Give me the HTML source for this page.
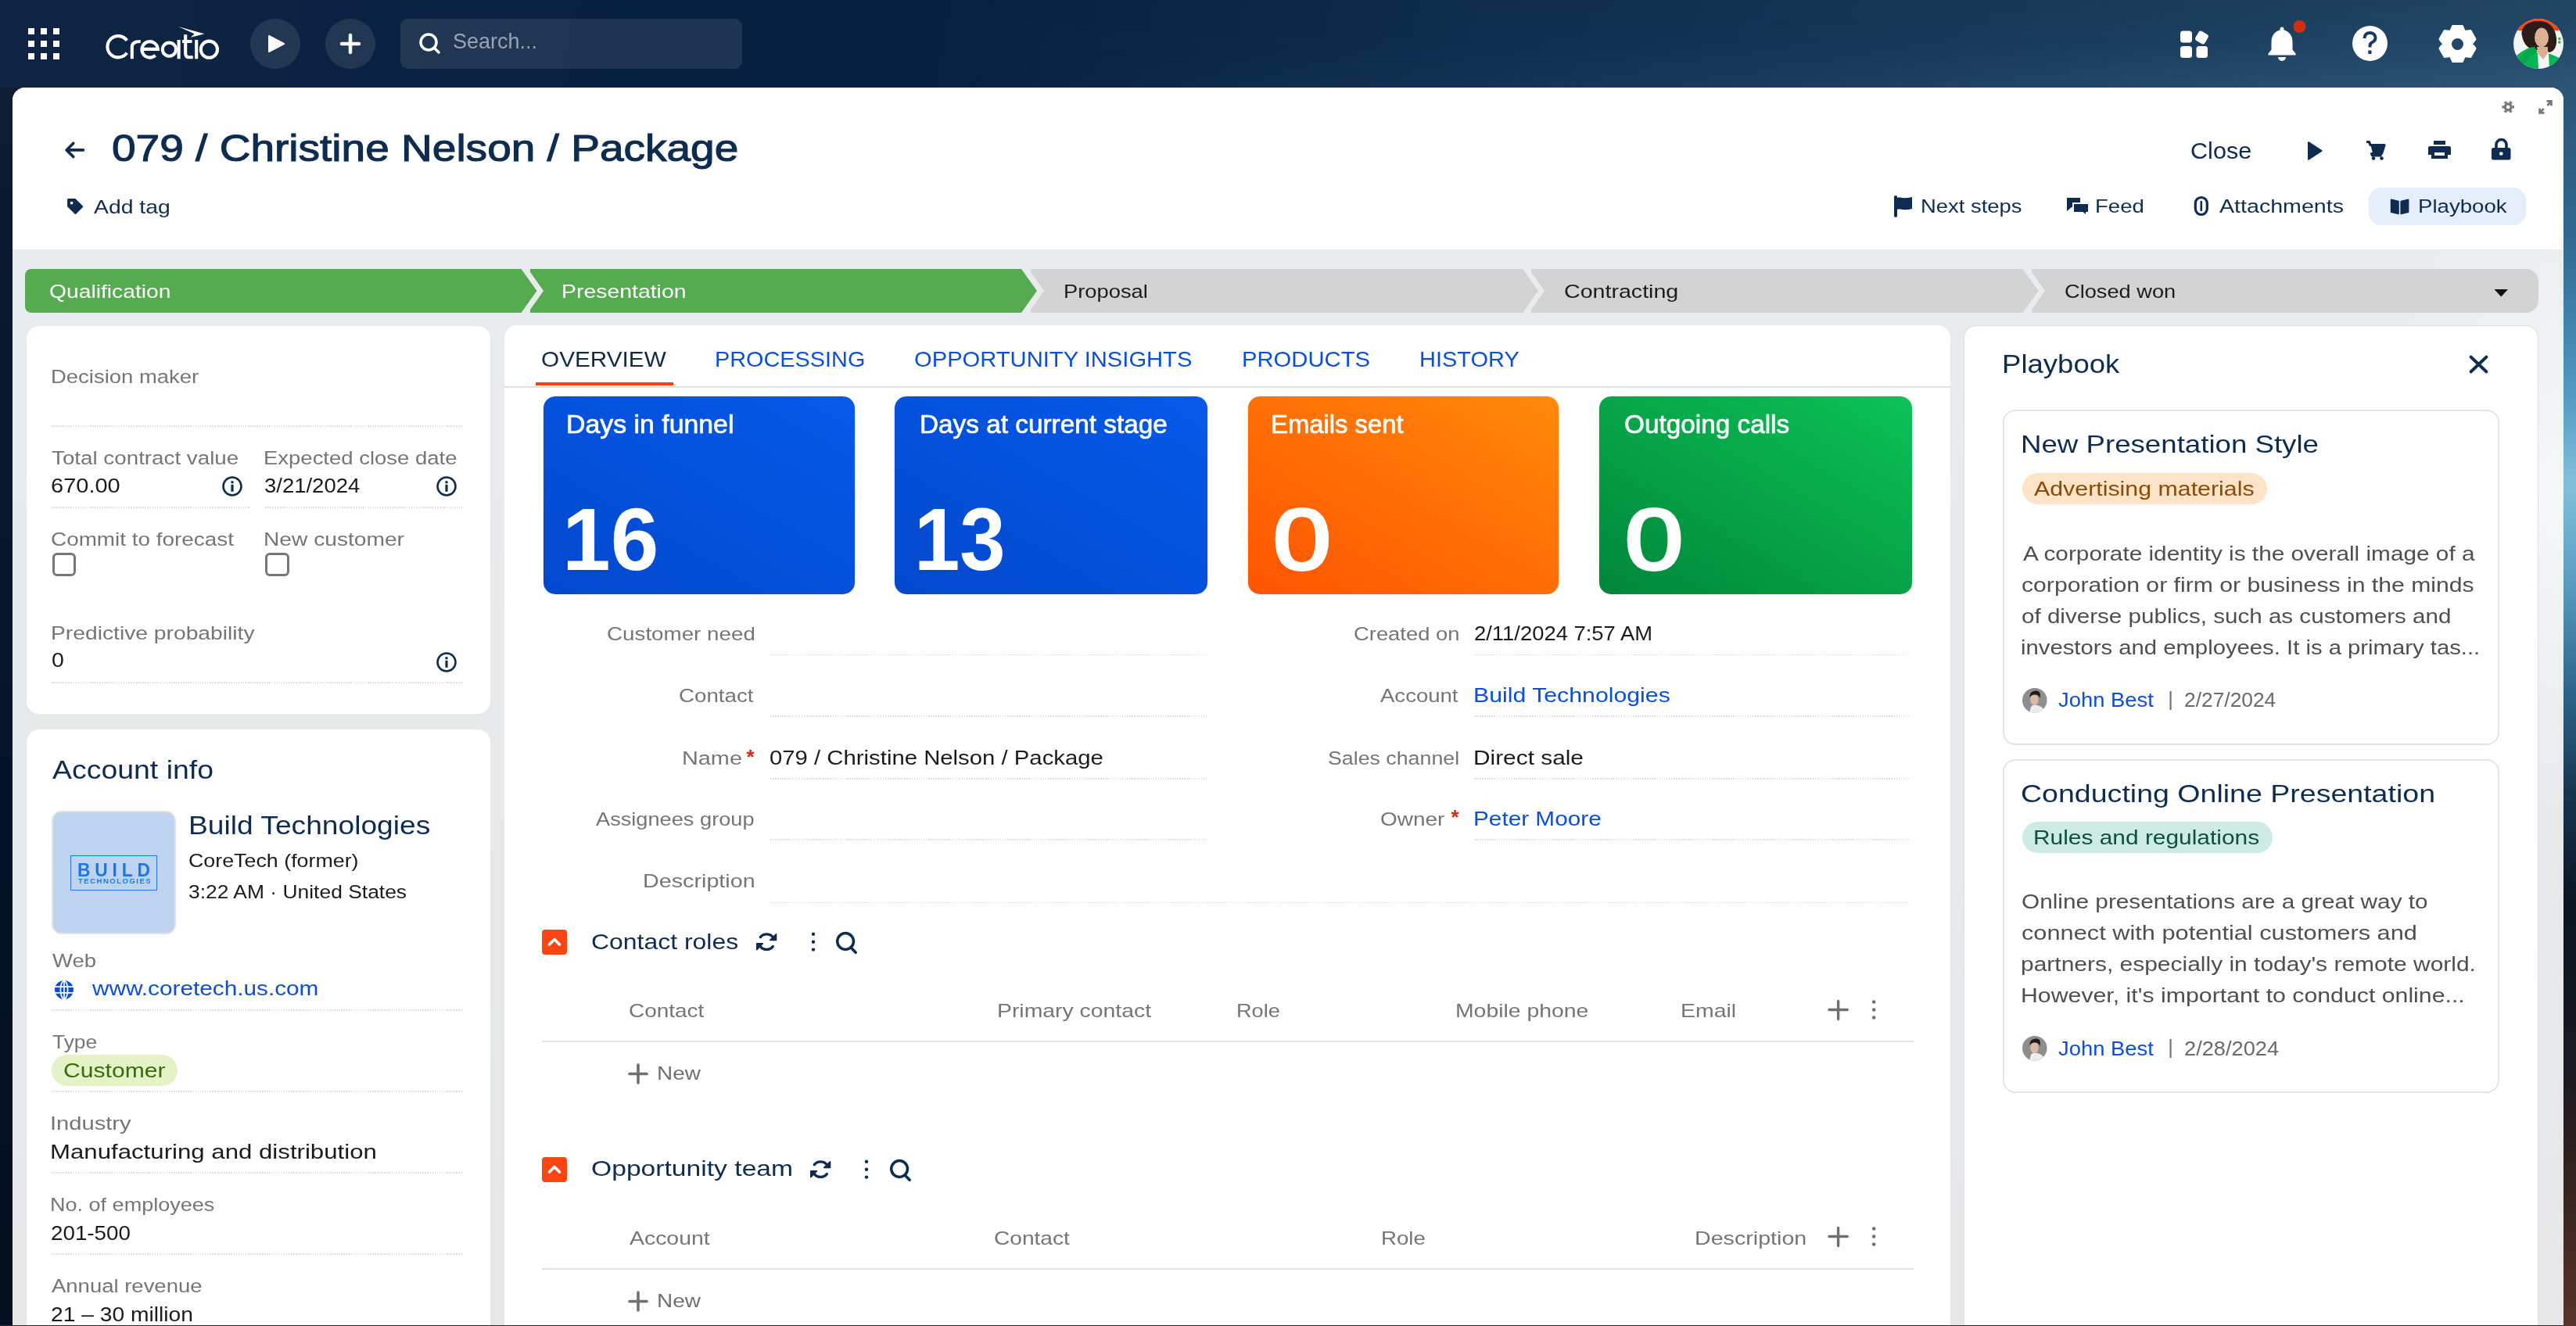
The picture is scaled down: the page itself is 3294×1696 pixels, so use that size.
<!DOCTYPE html><html><head><meta charset="utf-8"><style>
html,body{margin:0;padding:0;width:3294px;height:1696px;overflow:hidden;background:#0a1e38}
body{position:relative;font-family:"Liberation Sans",sans-serif}
.t{position:absolute;white-space:pre;transform-origin:0 0}
svg{overflow:visible}
</style></head><body>
<div style="position:absolute;left:0;top:0;width:3294px;height:1696px;background:linear-gradient(100deg,#0f2543 0%,#05203f 30%,#133253 60%,#28506f 100%)"></div><div style="position:absolute;left:1200px;top:0;width:2094px;height:112px;background:linear-gradient(180deg,rgba(0,0,0,0.07) 0%,rgba(255,255,255,0) 50%,rgba(120,170,210,0.12) 100%);-webkit-mask-image:linear-gradient(90deg,transparent 0%,#000 100%)"></div><div style="position:absolute;left:3270px;top:112px;width:24px;height:1584px;background:linear-gradient(180deg,#2a5577 0%,#2f6890 12%,#4f97c0 24%,#80c0dc 32%,#5a9cc0 40%,#2f6a90 48%,#163650 57%,#0a1522 66%,#1c1a20 80%,#3a2520 90%,#5a3428 100%)"></div><div style="position:absolute;left:0;top:112px;width:24px;height:1584px;background:linear-gradient(180deg,#0b1c33 0%,#05142a 50%,#03101f 100%)"></div><div style="position:absolute;left:36px;top:36px;width:8px;height:8px;background:#fff"></div><div style="position:absolute;left:36px;top:52px;width:8px;height:8px;background:#fff"></div><div style="position:absolute;left:36px;top:68px;width:8px;height:8px;background:#fff"></div><div style="position:absolute;left:52px;top:36px;width:8px;height:8px;background:#fff"></div><div style="position:absolute;left:52px;top:52px;width:8px;height:8px;background:#fff"></div><div style="position:absolute;left:52px;top:68px;width:8px;height:8px;background:#fff"></div><div style="position:absolute;left:68px;top:36px;width:8px;height:8px;background:#fff"></div><div style="position:absolute;left:68px;top:52px;width:8px;height:8px;background:#fff"></div><div style="position:absolute;left:68px;top:68px;width:8px;height:8px;background:#fff"></div><svg style="position:absolute;left:0;top:0" width="400" height="112"><g fill="none" stroke="#fff" stroke-width="4.1">
<path d="M162.3 51.8 A13.7 13.7 0 1 0 162.3 67.6"/>
<path d="M168.8 75.3 V60 Q168.8 53 179.7 53"/>
<path d="M181.4 62.9 H201.8 A10.2 10.2 0 1 0 198.6 70.8"/>
<circle cx="216.4" cy="63.2" r="8.6"/>
<path d="M228.6 51 V75.3"/>
<path d="M237.2 44.3 V68.5 Q237.2 73.3 242 73.3 H246.8 M233 53 H245.5"/>
<path d="M251.2 51 V75.3"/>
<circle cx="267.4" cy="63.2" r="10.6"/></g>
<polygon points="228,34 261.4,43.3 244,47.7 248.5,43.2" fill="#fff"/></svg><div style="position:absolute;left:320px;top:24px;width:64px;height:64px;border-radius:50%;background:rgba(255,255,255,0.095)"></div><svg style="position:absolute;left:0;top:0" width="500" height="112"><polygon points="344,46 363,56 344,66" fill="#fff" stroke="#fff" stroke-width="2" stroke-linejoin="round"/></svg><div style="position:absolute;left:416px;top:24px;width:64px;height:64px;border-radius:50%;background:rgba(255,255,255,0.095)"></div><svg style="position:absolute;left:0;top:0" width="500" height="112"><path d="M448 45 V67 M437 56 H459" stroke="#fff" stroke-width="4.5" stroke-linecap="round"/></svg><div style="position:absolute;left:512px;top:24px;width:437px;height:64px;border-radius:9px;background:rgba(255,255,255,0.095)"></div><svg style="position:absolute;left:0;top:0" width="1000" height="112"><circle cx="548" cy="54" r="10" fill="none" stroke="#fff" stroke-width="3.5"/><path d="M555.5 61.5 L561 67" stroke="#fff" stroke-width="3.5" stroke-linecap="round"/></svg><svg style="position:absolute;left:2700px;top:0" width="594" height="112">
<rect x="88" y="39.5" width="15" height="15" rx="3.5" fill="#fff"/>
<rect x="88" y="59" width="15" height="15" rx="3.5" fill="#fff"/>
<rect x="108.5" y="59" width="14.5" height="15" rx="3.5" fill="#fff"/>
<rect x="108.5" y="41" width="14" height="14" rx="3.5" fill="#fff" transform="rotate(30 115.5 48)"/>
<path d="M218 34.5 c-1.5 0 -2.5 1 -2.5 2.5 v1.5 c-7 1.7 -11 7.5 -11 15 v10 l-4 5 v2 h35 v-2 l-4 -5 v-10 c0 -7.5 -4 -13.3 -11 -15 v-1.5 c0 -1.5 -1 -2.5 -2.5 -2.5z M213 73 a5 5 0 0 0 10 0z" fill="#fff"/>
<circle cx="240.5" cy="34" r="8" fill="#d22f12"/>
<circle cx="330.5" cy="55.5" r="22.5" fill="#fff"/>
<path d="M323.5 49 c0 -4.5 3 -7 7 -7 s7 2.5 7 6.5 c0 3 -2 4.5 -4 5.5 c-2 1 -3 2 -3 4.5 v2" fill="none" stroke="#1a3a5a" stroke-width="4"/>
<rect x="328.3" y="64.5" width="4.2" height="4.5" fill="#1a3a5a"/>
<g transform="translate(442.5 56.5)"><path d="M-6 -23 h12 l3 7 l7.5 -1 l6 10.5 l-4.5 6 l4.5 6 l-6 10.5 l-7.5 -1 l-3 7 h-12 l-3 -7 l-7.5 1 l-6 -10.5 l4.5 -6 l-4.5 -6 l6 -10.5 l7.5 1z" fill="#fff" stroke="#fff" stroke-width="3" stroke-linejoin="round"/><circle r="7.5" fill="#234766"/></g>
</svg><svg style="position:absolute;left:3214.4px;top:23.8px" width="64" height="64"><defs><clipPath id="av"><circle cx="32" cy="32" r="32"/></clipPath></defs>
<g clip-path="url(#av)"><rect width="64" height="64" fill="#f3f3f3"/><rect width="64" height="15" fill="#ff4510"/>
<path d="M11 22 C8 10 20 2 33 3 C46 3 54 12 55 25 C56 35 52 42 46 43 L40 40 L27 40 C18 38 13 32 11 22z" fill="#2b1b19"/>
<ellipse cx="36" cy="24" rx="9" ry="12.5" fill="#dcae94"/>
<path d="M27 12 C22 18 24 30 27 38 L22 38 C18 28 20 16 27 12z" fill="#2b1b19"/>
<path d="M0 64 L0 52 C4 46 10 42 18 38 C22 36 26 36 28 38 L30 44 L44 44 C50 46 58 50 64 52 V64z" fill="#06b555"/>
<path d="M6 52 C12 44 19 38 27 36 L31 42 C24 46 18 52 12 60z" fill="#00a84c"/>
<path d="M31 44 L45 44 L46 64 L32 64z" fill="#f6f6f6"/><path d="M30 36 L44 36 L44 44 L38 52 L31 44z" fill="#dcae94"/>
<circle cx="58.8" cy="25.5" r="1.8" fill="#3cb043"/><circle cx="58.8" cy="30" r="1.8" fill="#3cb043"/></g></svg><div style="position:absolute;left:16px;top:112px;width:3262px;height:1583px;border-radius:16px 16px 0 0;background:radial-gradient(ellipse 260px 420px at 100% 33%,rgba(244,249,252,0.95),rgba(244,249,252,0) 100%),linear-gradient(180deg,#e9edf0 0%,#e7e9eb 40%,#e7e7e8 100%);overflow:hidden"><div style="position:absolute;left:0;top:0;width:3262px;height:207px;background:#fff"></div></div><svg style="position:absolute;left:0;top:100px" width="300" height="200"><path d="M106.5 91.9 H85.6 M93.8 83.2 L85.1 91.9 L93.8 100.6" fill="none" stroke="#0d2c4f" stroke-width="3.6" stroke-linecap="round" stroke-linejoin="round"/><path d="M87.2 155 h8.6 l9.3 9.3 l-8.6 8.6 l-9.3 -9.3z" fill="#0d2c4f" stroke="#0d2c4f" stroke-width="2.2" stroke-linejoin="round"/><rect x="90" y="158" width="3.2" height="3.2" fill="#fff"/></svg><svg style="position:absolute;left:3190px;top:120px" width="90" height="40">
<g transform="translate(17.2 16.9)"><circle r="6.6" fill="none" stroke="#777" stroke-width="2.6" stroke-dasharray="3.3 3.6" transform="rotate(-15)"/><circle r="5.6" fill="#777"/><circle r="2.4" fill="#fff"/></g>
<path d="M67.3 15 L71.5 10.5 M63 144 M57.6 24.4 L62.8 19" stroke="#777" stroke-width="2.6"/><path d="M66.5 9.3 H72.4 V15.2 M57.6 18.8 V24.4 H63.4" fill="none" stroke="#777" stroke-width="2.8"/>
</svg><svg style="position:absolute;left:2900px;top:160px" width="340" height="60">
<path d="M52 22 L68.5 32.8 L52 43.7z" fill="#0d2c4f" stroke="#0d2c4f" stroke-width="2" stroke-linejoin="round"/>
<path d="M126 21.5 h3.5 l1.5 4 h18 l-3.5 11 h-13 l1 2.5 h12" fill="none" stroke="#0d2c4f" stroke-width="3.2" stroke-linejoin="round"/><path d="M131.5 26 h17 l-3 10 h-11.5z" fill="#0d2c4f"/><circle cx="135" cy="42.5" r="2.3" fill="#0d2c4f"/><circle cx="145.5" cy="42.5" r="2.3" fill="#0d2c4f"/>
<path d="M212 20 h15 v5 h-15z M207 27 h25 a2 2 0 0 1 2 2 v9 h-4 v5 h-21 v-5 h-4 v-9 a2 2 0 0 1 2 -2z" fill="#0d2c4f"/><rect x="213" y="35" width="13" height="4" fill="#fff"/>
<path d="M292 30 v-5 a6.5 6.5 0 0 1 13 0 v5" fill="none" stroke="#0d2c4f" stroke-width="3.6"/><rect x="286" y="29" width="24.5" height="15.5" rx="2.5" fill="#0d2c4f"/><circle cx="298.3" cy="36.5" r="2.3" fill="#fff"/>
</svg><div style="position:absolute;left:3029px;top:240px;width:201px;height:48px;border-radius:16px;background:#e5ecfa"></div><svg style="position:absolute;left:2400px;top:240px" width="700" height="50">
<path d="M24 12 v24" stroke="#0d2c4f" stroke-width="4" stroke-linecap="round"/><path d="M24 13 c6 -2 10 2 21 -1 v15 c-10 3 -15 -1 -21 1z" fill="#0d2c4f"/>
<path d="M243 13 h17 v12 h-11 l-6 5z" fill="#0d2c4f"/><path d="M251 20 h20 v12 h-3 v4 l-5 -4 h-12z" fill="#0d2c4f" stroke="#fff" stroke-width="2"/>
<rect x="407.3" y="12.5" width="15" height="22" rx="7.5" fill="none" stroke="#0d2c4f" stroke-width="3.2"/><path d="M414.8 18 V29" stroke="#0d2c4f" stroke-width="2.6" stroke-linecap="round"/>
<path d="M657.8 15.5 L666.8 17.8 V33.3 L657.8 31z M679.4 15.5 L670.4 17.8 V33.3 L679.4 31z" fill="#0d2c4f" stroke="#0d2c4f" stroke-width="2" stroke-linejoin="round"/>
</svg><svg style="position:absolute;left:0;top:0" width="3294" height="420"><path d="M40 344 H666.5 L686.5 372 L666.5 400 H40 a8 8 0 0 1 -8 -8 V352 a8 8 0 0 1 8 -8z" fill="#56ab50"/><path d="M678 344 H1306 L1326 372 L1306 400 H678 V396 L695 372 L678 348z" fill="#56ab50"/><path d="M1318 344 H1947 L1967 372 L1947 400 H1318 V396 L1335 372 L1318 348z" fill="#d3d3d3"/><path d="M1958 344 H2586.5 L2606.5 372 L2586.5 400 H1958 V396 L1975 372 L1958 348z" fill="#d3d3d3"/><path d="M2598 344 H3230 a16 16 0 0 1 16 16 V384 a16 16 0 0 1 -16 16 H2598 V396 L2615 372 L2598 348z" fill="#d3d3d3"/><path d="M3189.5 370 h17.5 l-8.75 9.5z" fill="#111"/></svg><div style="position:absolute;left:34px;top:417px;width:593px;height:496px;border-radius:16px;background:#fff"></div><div style="position:absolute;left:66px;top:544.25px;width:525px;height:1.6px;background:repeating-linear-gradient(90deg,#e0e0e0 0 1.6px,transparent 1.6px 3.06px)"></div><div style="position:absolute;left:66px;top:648.25px;width:253px;height:1.6px;background:repeating-linear-gradient(90deg,#e0e0e0 0 1.6px,transparent 1.6px 3.06px)"></div><div style="position:absolute;left:339px;top:648.25px;width:252px;height:1.6px;background:repeating-linear-gradient(90deg,#e0e0e0 0 1.6px,transparent 1.6px 3.06px)"></div><svg style="position:absolute;left:283px;top:608.3px" width="28" height="28"><circle cx="14" cy="14" r="11.5" fill="none" stroke="#0d2c4f" stroke-width="2.6"/><circle cx="14" cy="8.8" r="1.8" fill="#0d2c4f"/><rect x="12.4" y="11.8" width="3.2" height="9" fill="#0d2c4f"/></svg><svg style="position:absolute;left:556.5px;top:608.3px" width="28" height="28"><circle cx="14" cy="14" r="11.5" fill="none" stroke="#0d2c4f" stroke-width="2.6"/><circle cx="14" cy="8.8" r="1.8" fill="#0d2c4f"/><rect x="12.4" y="11.8" width="3.2" height="9" fill="#0d2c4f"/></svg><div style="position:absolute;left:66.5px;top:707px;width:30.5px;height:30px;box-sizing:border-box;border:3px solid #777;border-radius:6px"></div><div style="position:absolute;left:339px;top:707px;width:30.5px;height:30px;box-sizing:border-box;border:3px solid #777;border-radius:6px"></div><svg style="position:absolute;left:556.5px;top:832.5px" width="28" height="28"><circle cx="14" cy="14" r="11.5" fill="none" stroke="#0d2c4f" stroke-width="2.6"/><circle cx="14" cy="8.8" r="1.8" fill="#0d2c4f"/><rect x="12.4" y="11.8" width="3.2" height="9" fill="#0d2c4f"/></svg><div style="position:absolute;left:66px;top:872.25px;width:525px;height:1.6px;background:repeating-linear-gradient(90deg,#e0e0e0 0 1.6px,transparent 1.6px 3.06px)"></div><div style="position:absolute;left:34px;top:933px;width:593px;height:800px;border-radius:16px;background:#fff"></div><div style="position:absolute;left:66px;top:1037px;width:159px;height:158px;box-sizing:border-box;border-radius:13px;background:#bdd3f0;border:2px solid #dfe2e6"></div><div style="position:absolute;left:90px;top:1094px;width:111px;height:45px;box-sizing:border-box;border:1.6px solid #1f78e4"></div><svg style="position:absolute;left:69.8px;top:1253.5px" width="24" height="24"><circle cx="12" cy="12" r="12" fill="#0b4fd6"/><path d="M0 8.2 H24 M0 15.8 H24 M12 0 V24" stroke="#fff" stroke-width="1.7"/><ellipse cx="12" cy="12" rx="4.6" ry="11.5" fill="none" stroke="#fff" stroke-width="1.7"/></svg><div style="position:absolute;left:66px;top:1291.25px;width:525px;height:1.6px;background:repeating-linear-gradient(90deg,#e0e0e0 0 1.6px,transparent 1.6px 3.06px)"></div><div style="position:absolute;left:66px;top:1349px;width:161px;height:39.5px;border-radius:20px;background:#e4f2c8"></div><div style="position:absolute;left:66px;top:1395.25px;width:525px;height:1.6px;background:repeating-linear-gradient(90deg,#e0e0e0 0 1.6px,transparent 1.6px 3.06px)"></div><div style="position:absolute;left:66px;top:1499.25px;width:525px;height:1.6px;background:repeating-linear-gradient(90deg,#e0e0e0 0 1.6px,transparent 1.6px 3.06px)"></div><div style="position:absolute;left:66px;top:1603.25px;width:525px;height:1.6px;background:repeating-linear-gradient(90deg,#e0e0e0 0 1.6px,transparent 1.6px 3.06px)"></div><div style="position:absolute;left:645px;top:416px;width:1849px;height:1400px;border-radius:16px;background:#fff"></div><div style="position:absolute;left:645px;top:494.2px;width:1849px;height:1.7px;background:#e0e0e0"></div><div style="position:absolute;left:685px;top:489.2px;width:175.5px;height:3.4px;background:#fc3f10"></div><div style="position:absolute;left:694.7px;top:507px;width:397.89999999999986px;height:252.5px;border-radius:15px;box-shadow:0 0 0 1px rgba(0,0,0,0.07);background:linear-gradient(30deg,#0249cc 0%,#0659ea 100%)"></div><div style="position:absolute;left:1144px;top:507px;width:399.70000000000005px;height:252.5px;border-radius:15px;box-shadow:0 0 0 1px rgba(0,0,0,0.07);background:linear-gradient(30deg,#0249cc 0%,#0659ea 100%)"></div><div style="position:absolute;left:1595.5px;top:507px;width:397.5px;height:252.5px;border-radius:15px;box-shadow:0 0 0 1px rgba(0,0,0,0.07);background:linear-gradient(30deg,#ff5400 0%,#ff890b 100%)"></div><div style="position:absolute;left:2045px;top:507px;width:399.5px;height:252.5px;border-radius:15px;box-shadow:0 0 0 1px rgba(0,0,0,0.07);background:linear-gradient(30deg,#008639 0%,#0cc257 100%)"></div><div style="position:absolute;left:985px;top:836.65px;width:558px;height:1.6px;background:repeating-linear-gradient(90deg,#e0e0e0 0 1.6px,transparent 1.6px 3.06px)"></div><div style="position:absolute;left:1886.4px;top:836.65px;width:556.5999999999999px;height:1.6px;background:repeating-linear-gradient(90deg,#e0e0e0 0 1.6px,transparent 1.6px 3.06px)"></div><div style="position:absolute;left:985px;top:914.95px;width:558px;height:1.6px;background:repeating-linear-gradient(90deg,#e0e0e0 0 1.6px,transparent 1.6px 3.06px)"></div><div style="position:absolute;left:1886.4px;top:914.95px;width:556.5999999999999px;height:1.6px;background:repeating-linear-gradient(90deg,#e0e0e0 0 1.6px,transparent 1.6px 3.06px)"></div><div style="position:absolute;left:985px;top:995.25px;width:558px;height:1.6px;background:repeating-linear-gradient(90deg,#e0e0e0 0 1.6px,transparent 1.6px 3.06px)"></div><div style="position:absolute;left:1886.4px;top:995.25px;width:556.5999999999999px;height:1.6px;background:repeating-linear-gradient(90deg,#e0e0e0 0 1.6px,transparent 1.6px 3.06px)"></div><div style="position:absolute;left:985px;top:1073.25px;width:558px;height:1.6px;background:repeating-linear-gradient(90deg,#e0e0e0 0 1.6px,transparent 1.6px 3.06px)"></div><div style="position:absolute;left:1886.4px;top:1073.25px;width:556.5999999999999px;height:1.6px;background:repeating-linear-gradient(90deg,#e0e0e0 0 1.6px,transparent 1.6px 3.06px)"></div><div style="position:absolute;left:985px;top:1153.55px;width:1458px;height:1.6px;background:repeating-linear-gradient(90deg,#e0e0e0 0 1.6px,transparent 1.6px 3.06px)"></div><div style="position:absolute;left:693px;top:1189px;width:32px;height:31.5px;border-radius:4px;background:#fb4614"></div><svg style="position:absolute;left:693px;top:1189px" width="32" height="32"><path d="M9.5 19 L16 12.5 L22.5 19" fill="none" stroke="#fff" stroke-width="3.6" stroke-linecap="round" stroke-linejoin="round"/></svg><svg style="position:absolute;left:959.3px;top:1185px" width="40" height="40"><path d="M13.3 13.6 A10.3 10.3 0 0 1 29.3 13.6 M29.3 25.6 A10.3 10.3 0 0 1 13.3 25.6" fill="none" stroke="#0d2c4f" stroke-width="3.3" stroke-linecap="round"/><path d="M33.5 9.8 V17.4 H25.8z M8.8 21.7 V29.6 L16.4 21.7z" fill="#0d2c4f" stroke="#0d2c4f" stroke-width="1.6" stroke-linejoin="round"/></svg><svg style="position:absolute;left:1035.6px;top:1185px" width="8" height="40"><circle cx="4" cy="9.8" r="2.2" fill="#0d2c4f"/><circle cx="4" cy="19.8" r="2.2" fill="#0d2c4f"/><circle cx="4" cy="29.6" r="2.2" fill="#0d2c4f"/></svg><svg style="position:absolute;left:1069px;top:1185px" width="40" height="40"><circle cx="12.1" cy="19" r="10.4" fill="none" stroke="#0d2c4f" stroke-width="3.5"/><path d="M20.3 28.3 L25.2 33.3" stroke="#0d2c4f" stroke-width="3.6" stroke-linecap="round"/></svg><div style="position:absolute;left:693px;top:1331px;width:1754px;height:2px;background:#e3e3e3"></div><svg style="position:absolute;left:2330px;top:1276px" width="80" height="32"><path d="M20.6 4.5 V27.5 M9 15.5 H32.2" stroke="#6f6f6f" stroke-width="3.4" stroke-linecap="round"/><circle cx="66.2" cy="5.5" r="2.3" fill="#6f6f6f"/><circle cx="66.2" cy="15.5" r="2.3" fill="#6f6f6f"/><circle cx="66.2" cy="25.5" r="2.3" fill="#6f6f6f"/></svg><svg style="position:absolute;left:800px;top:1357px" width="32" height="32"><path d="M16 5 V28 M5 16.5 H27" stroke="#6f6f6f" stroke-width="3.6" stroke-linecap="round"/></svg><div style="position:absolute;left:693px;top:1480px;width:32px;height:31.5px;border-radius:4px;background:#fb4614"></div><svg style="position:absolute;left:693px;top:1480px" width="32" height="32"><path d="M9.5 19 L16 12.5 L22.5 19" fill="none" stroke="#fff" stroke-width="3.6" stroke-linecap="round" stroke-linejoin="round"/></svg><svg style="position:absolute;left:1028.3px;top:1476px" width="40" height="40"><path d="M13.3 13.6 A10.3 10.3 0 0 1 29.3 13.6 M29.3 25.6 A10.3 10.3 0 0 1 13.3 25.6" fill="none" stroke="#0d2c4f" stroke-width="3.3" stroke-linecap="round"/><path d="M33.5 9.8 V17.4 H25.8z M8.8 21.7 V29.6 L16.4 21.7z" fill="#0d2c4f" stroke="#0d2c4f" stroke-width="1.6" stroke-linejoin="round"/></svg><svg style="position:absolute;left:1104px;top:1476px" width="8" height="40"><circle cx="4" cy="9.8" r="2.2" fill="#0d2c4f"/><circle cx="4" cy="19.8" r="2.2" fill="#0d2c4f"/><circle cx="4" cy="29.6" r="2.2" fill="#0d2c4f"/></svg><svg style="position:absolute;left:1138px;top:1476px" width="40" height="40"><circle cx="12.1" cy="19" r="10.4" fill="none" stroke="#0d2c4f" stroke-width="3.5"/><path d="M20.3 28.3 L25.2 33.3" stroke="#0d2c4f" stroke-width="3.6" stroke-linecap="round"/></svg><div style="position:absolute;left:693px;top:1622px;width:1754px;height:2px;background:#e3e3e3"></div><svg style="position:absolute;left:2330px;top:1566px" width="80" height="32"><path d="M20.6 4.5 V27.5 M9 15.5 H32.2" stroke="#6f6f6f" stroke-width="3.4" stroke-linecap="round"/><circle cx="66.2" cy="5.5" r="2.3" fill="#6f6f6f"/><circle cx="66.2" cy="15.5" r="2.3" fill="#6f6f6f"/><circle cx="66.2" cy="25.5" r="2.3" fill="#6f6f6f"/></svg><svg style="position:absolute;left:800px;top:1648px" width="32" height="32"><path d="M16 5 V28 M5 16.5 H27" stroke="#6f6f6f" stroke-width="3.6" stroke-linecap="round"/></svg><div style="position:absolute;left:2510.5px;top:416px;width:735px;height:1400px;box-sizing:border-box;border:1.5px solid #dedede;border-radius:16px;background:#fff"></div><svg style="position:absolute;left:3150px;top:447px" width="40" height="40"><path d="M9.5 9.5 L29.5 28.5 M29.5 9.5 L9.5 28.5" stroke="#0d2c4f" stroke-width="3.8" stroke-linecap="round"/></svg><div style="position:absolute;left:2560.5px;top:523.5px;width:635.5px;height:429.0px;box-sizing:border-box;border:2px solid #e4e4e4;border-radius:16px;background:#fff"></div><div style="position:absolute;left:2586px;top:605px;width:313px;height:39.5px;border-radius:20px;background:#fde3c7"></div><svg style="position:absolute;left:2586px;top:879.5px" width="32" height="32"><defs><clipPath id="cp523"><circle cx="15.75" cy="15.75" r="15.75"/></clipPath></defs><g clip-path="url(#cp523)"><rect width="32" height="32" fill="#8e8e8e"/><path d="M11 24 C13 21 16 21 19 22 C24 23 28 26 30 32 H9z" fill="#ececec"/><ellipse cx="15.5" cy="15" rx="5.3" ry="7" fill="#d9b8a8"/><path d="M9.5 12 C9 5 15 2.5 20 4 C23 5 23.5 9 22.5 13 C21.5 9.5 19 8 15 8.5 C12 9 10.5 10 9.5 12z" fill="#221a18"/></g></svg><div style="position:absolute;left:2560.5px;top:970.5px;width:635.5px;height:427.0px;box-sizing:border-box;border:2px solid #e4e4e4;border-radius:16px;background:#fff"></div><div style="position:absolute;left:2586px;top:1051.3px;width:319.5px;height:39.5px;border-radius:20px;background:#cdeae5"></div><svg style="position:absolute;left:2586px;top:1325.4px" width="32" height="32"><defs><clipPath id="cp970"><circle cx="15.75" cy="15.75" r="15.75"/></clipPath></defs><g clip-path="url(#cp970)"><rect width="32" height="32" fill="#8e8e8e"/><path d="M11 24 C13 21 16 21 19 22 C24 23 28 26 30 32 H9z" fill="#ececec"/><ellipse cx="15.5" cy="15" rx="5.3" ry="7" fill="#d9b8a8"/><path d="M9.5 12 C9 5 15 2.5 20 4 C23 5 23.5 9 22.5 13 C21.5 9.5 19 8 15 8.5 C12 9 10.5 10 9.5 12z" fill="#221a18"/></g></svg><div style="position:absolute;left:0;top:1695px;width:3278px;height:1px;background:#1a2b3d"></div>
<div class="t" style="left:579.0px;top:39.0px;font-size:27.5px;line-height:27.5px;color:#97a4b3;transform:scaleX(0.9813);">Search...</div><div class="t" style="left:142.9px;top:166.0px;font-size:48px;line-height:48px;color:#0d2c4f;transform:scaleX(1.1463);-webkit-text-stroke:1.1px #0d2c4f;">079 / Christine Nelson / Package</div><div class="t" style="left:120.0px;top:253.0px;font-size:24.8px;line-height:24.8px;color:#0d2c4f;transform:scaleX(1.1429);">Add tag</div><div class="t" style="left:2800.9px;top:179.0px;font-size:29px;line-height:29px;color:#0d2c4f;transform:scaleX(1.0556);">Close</div><div class="t" style="left:2455.8px;top:252.0px;font-size:24.5px;line-height:24.5px;color:#0d2c4f;transform:scaleX(1.1195);">Next steps</div><div class="t" style="left:2679.3px;top:252.0px;font-size:24.5px;line-height:24.5px;color:#0d2c4f;transform:scaleX(1.1250);">Feed</div><div class="t" style="left:2838.0px;top:252.0px;font-size:24.5px;line-height:24.5px;color:#0d2c4f;transform:scaleX(1.1676);">Attachments</div><div class="t" style="left:3091.7px;top:252.0px;font-size:24.5px;line-height:24.5px;color:#0d2c4f;transform:scaleX(1.1273);">Playbook</div><div class="t" style="left:63.4px;top:361.0px;font-size:24.5px;line-height:24.5px;color:#fff;transform:scaleX(1.1534);">Qualification</div><div class="t" style="left:718.3px;top:361.0px;font-size:24.5px;line-height:24.5px;color:#fff;transform:scaleX(1.1597);">Presentation</div><div class="t" style="left:1359.8px;top:361.0px;font-size:24.5px;line-height:24.5px;color:#1c1c1c;transform:scaleX(1.1151);">Proposal</div><div class="t" style="left:1999.8px;top:361.0px;font-size:24.5px;line-height:24.5px;color:#1c1c1c;transform:scaleX(1.1675);">Contracting</div><div class="t" style="left:2639.9px;top:361.0px;font-size:24.5px;line-height:24.5px;color:#1c1c1c;transform:scaleX(1.1111);">Closed won</div><div class="t" style="left:65.2px;top:470.0px;font-size:24.5px;line-height:24.5px;color:#757575;transform:scaleX(1.1210);">Decision maker</div><div class="t" style="left:66.0px;top:574.0px;font-size:24.5px;line-height:24.5px;color:#757575;transform:scaleX(1.1333);">Total contract value</div><div class="t" style="left:64.9px;top:608.0px;font-size:26px;line-height:26px;color:#1b1b1b;transform:scaleX(1.1154);">670.00</div><div class="t" style="left:336.8px;top:574.0px;font-size:24.5px;line-height:24.5px;color:#757575;transform:scaleX(1.1216);">Expected close date</div><div class="t" style="left:337.9px;top:608.0px;font-size:26px;line-height:26px;color:#1b1b1b;transform:scaleX(1.0570);">3/21/2024</div><div class="t" style="left:65.2px;top:678.0px;font-size:24.5px;line-height:24.5px;color:#757575;transform:scaleX(1.1376);">Commit to forecast</div><div class="t" style="left:336.7px;top:678.0px;font-size:24.5px;line-height:24.5px;color:#757575;transform:scaleX(1.1494);">New customer</div><div class="t" style="left:64.8px;top:798.0px;font-size:24.5px;line-height:24.5px;color:#757575;transform:scaleX(1.1527);">Predictive probability</div><div class="t" style="left:66.0px;top:831.0px;font-size:26px;line-height:26px;color:#1b1b1b;transform:scaleX(1.1000);">0</div><div class="t" style="left:66.8px;top:969.0px;font-size:32.7px;line-height:32.7px;color:#0d2c4f;transform:scaleX(1.1453);">Account info</div><div class="t" style="left:99.2px;top:1102.0px;font-size:23.5px;line-height:23.5px;color:#1c78e6;font-weight:bold;transform:scaleX(0.9702);letter-spacing:6px;">BUILD</div><div class="t" style="left:100.2px;top:1122.0px;font-size:9.5px;line-height:9.5px;color:#1c78e6;font-weight:bold;transform:scaleX(1.0022);letter-spacing:1.5px;">TECHNOLOGIES</div><div class="t" style="left:240.5px;top:1040.0px;font-size:32.3px;line-height:32.3px;color:#0d2c4f;transform:scaleX(1.1509);">Build Technologies</div><div class="t" style="left:241.4px;top:1089.0px;font-size:24.5px;line-height:24.5px;color:#1b1b1b;transform:scaleX(1.0944);">CoreTech (former)</div><div class="t" style="left:241.4px;top:1129.0px;font-size:24.5px;line-height:24.5px;color:#1b1b1b;transform:scaleX(1.0786);">3:22 AM · United States</div><div class="t" style="left:66.6px;top:1217.0px;font-size:24.5px;line-height:24.5px;color:#757575;transform:scaleX(1.1204);">Web</div><div class="t" style="left:118.1px;top:1252.0px;font-size:25.5px;line-height:25.5px;color:#0b4fd6;transform:scaleX(1.1668);">www.coretech.us.com</div><div class="t" style="left:66.6px;top:1321.0px;font-size:24.5px;line-height:24.5px;color:#757575;transform:scaleX(1.0769);">Type</div><div class="t" style="left:80.8px;top:1357.0px;font-size:25.5px;line-height:25.5px;color:#3b6a0c;transform:scaleX(1.1807);">Customer</div><div class="t" style="left:64.2px;top:1425.0px;font-size:24.5px;line-height:24.5px;color:#757575;transform:scaleX(1.1882);">Industry</div><div class="t" style="left:64.2px;top:1461.0px;font-size:25.5px;line-height:25.5px;color:#1b1b1b;transform:scaleX(1.2231);">Manufacturing and distribution</div><div class="t" style="left:64.4px;top:1529.0px;font-size:24.5px;line-height:24.5px;color:#757575;transform:scaleX(1.1032);">No. of employees</div><div class="t" style="left:64.9px;top:1565.0px;font-size:25.5px;line-height:25.5px;color:#1b1b1b;transform:scaleX(1.0891);">201-500</div><div class="t" style="left:66.0px;top:1633.0px;font-size:24.5px;line-height:24.5px;color:#757575;transform:scaleX(1.1216);">Annual revenue</div><div class="t" style="left:64.9px;top:1669.0px;font-size:25.5px;line-height:25.5px;color:#1b1b1b;transform:scaleX(1.1062);">21 – 30 million</div><div class="t" style="left:692.0px;top:445.0px;font-size:28.5px;line-height:28.5px;color:#0e2a45;transform:scaleX(1.0434);">OVERVIEW</div><div class="t" style="left:914.4px;top:445.0px;font-size:28.5px;line-height:28.5px;color:#0b4fd6;transform:scaleX(1.0124);">PROCESSING</div><div class="t" style="left:1169.0px;top:445.0px;font-size:28.5px;line-height:28.5px;color:#0b4fd6;transform:scaleX(1.0232);">OPPORTUNITY INSIGHTS</div><div class="t" style="left:1588.4px;top:445.0px;font-size:28.5px;line-height:28.5px;color:#0b4fd6;transform:scaleX(1.0255);">PRODUCTS</div><div class="t" style="left:1814.8px;top:445.0px;font-size:28.5px;line-height:28.5px;color:#0b4fd6;transform:scaleX(1.0163);">HISTORY</div><div class="t" style="left:724.0px;top:525.0px;font-size:34px;line-height:34px;color:#fff;transform:scaleX(0.9953);-webkit-text-stroke:0.7px #fff;">Days in funnel</div><div class="t" style="left:719.1px;top:634.0px;font-size:113px;line-height:113px;color:#fff;font-weight:bold;transform:scaleX(0.9809);">16</div><div class="t" style="left:1175.6px;top:525.0px;font-size:34px;line-height:34px;color:#fff;transform:scaleX(0.9803);-webkit-text-stroke:0.7px #fff;">Days at current stage</div><div class="t" style="left:1169.2px;top:634.0px;font-size:113px;line-height:113px;color:#fff;font-weight:bold;transform:scaleX(0.9287);">13</div><div class="t" style="left:1625.4px;top:525.0px;font-size:34px;line-height:34px;color:#fff;transform:scaleX(0.9655);-webkit-text-stroke:0.7px #fff;">Emails sent</div><div class="t" style="left:1628.1px;top:635.0px;font-size:110px;line-height:110px;color:#fff;transform:scaleX(1.2053);-webkit-text-stroke:4.2px #fff;">0</div><div class="t" style="left:2076.6px;top:525.0px;font-size:34px;line-height:34px;color:#fff;transform:scaleX(0.9799);-webkit-text-stroke:0.7px #fff;">Outgoing calls</div><div class="t" style="left:2078.0px;top:635.0px;font-size:110px;line-height:110px;color:#fff;transform:scaleX(1.2123);-webkit-text-stroke:4.2px #fff;">0</div><div class="t" style="left:775.6px;top:799.0px;font-size:24.5px;line-height:24.5px;color:#757575;transform:scaleX(1.1333);">Customer need</div><div class="t" style="left:1730.7px;top:799.0px;font-size:24.5px;line-height:24.5px;color:#757575;transform:scaleX(1.1176);">Created on</div><div class="t" style="left:1885.3px;top:798.0px;font-size:25.5px;line-height:25.5px;color:#1b1b1b;transform:scaleX(1.0746);">2/11/2024 7:57 AM</div><div class="t" style="left:867.6px;top:878.0px;font-size:24.5px;line-height:24.5px;color:#757575;transform:scaleX(1.1310);">Contact</div><div class="t" style="left:1764.8px;top:878.0px;font-size:24.5px;line-height:24.5px;color:#757575;transform:scaleX(1.1236);">Account</div><div class="t" style="left:1884.0px;top:877.0px;font-size:25.5px;line-height:25.5px;color:#0b4fd6;transform:scaleX(1.1867);">Build Technologies</div><div class="t" style="left:871.8px;top:958.0px;font-size:24.5px;line-height:24.5px;color:#757575;transform:scaleX(1.1774);">Name</div><div class="t" style="left:954.6px;top:955.0px;font-size:26px;line-height:26px;color:#d22f12;font-weight:bold;">*</div><div class="t" style="left:983.9px;top:957.0px;font-size:25.5px;line-height:25.5px;color:#1b1b1b;transform:scaleX(1.1495);">079 / Christine Nelson / Package</div><div class="t" style="left:1697.7px;top:958.0px;font-size:24.5px;line-height:24.5px;color:#757575;transform:scaleX(1.0921);">Sales channel</div><div class="t" style="left:1884.1px;top:957.0px;font-size:25.5px;line-height:25.5px;color:#1b1b1b;transform:scaleX(1.1703);">Direct sale</div><div class="t" style="left:761.7px;top:1036.0px;font-size:24.5px;line-height:24.5px;color:#757575;transform:scaleX(1.1099);">Assignees group</div><div class="t" style="left:1765.2px;top:1036.0px;font-size:24.5px;line-height:24.5px;color:#757575;transform:scaleX(1.1408);">Owner</div><div class="t" style="left:1855.5px;top:1032.0px;font-size:26px;line-height:26px;color:#d22f12;font-weight:bold;">*</div><div class="t" style="left:1884.1px;top:1035.0px;font-size:25.5px;line-height:25.5px;color:#0b4fd6;transform:scaleX(1.1667);">Peter Moore</div><div class="t" style="left:821.9px;top:1115.0px;font-size:24.5px;line-height:24.5px;color:#757575;transform:scaleX(1.1723);">Description</div><div class="t" style="left:755.9px;top:1190.0px;font-size:28.5px;line-height:28.5px;color:#0d2c4f;transform:scaleX(1.1205);">Contact roles</div><div class="t" style="left:803.5px;top:1281.0px;font-size:24px;line-height:24px;color:#757575;transform:scaleX(1.1646);">Contact</div><div class="t" style="left:1275.1px;top:1281.0px;font-size:24px;line-height:24px;color:#757575;transform:scaleX(1.1818);">Primary contact</div><div class="t" style="left:1581.3px;top:1281.0px;font-size:24px;line-height:24px;color:#757575;transform:scaleX(1.1304);">Role</div><div class="t" style="left:1860.8px;top:1281.0px;font-size:24px;line-height:24px;color:#757575;transform:scaleX(1.1816);">Mobile phone</div><div class="t" style="left:2149.0px;top:1281.0px;font-size:24px;line-height:24px;color:#757575;transform:scaleX(1.1842);">Email</div><div class="t" style="left:840.2px;top:1361.0px;font-size:24px;line-height:24px;color:#6f6f6f;transform:scaleX(1.1630);">New</div><div class="t" style="left:755.8px;top:1480.0px;font-size:28.5px;line-height:28.5px;color:#0d2c4f;transform:scaleX(1.1806);">Opportunity team</div><div class="t" style="left:804.6px;top:1572.0px;font-size:24px;line-height:24px;color:#757575;transform:scaleX(1.1839);">Account</div><div class="t" style="left:1271.3px;top:1572.0px;font-size:24px;line-height:24px;color:#757575;transform:scaleX(1.1707);">Contact</div><div class="t" style="left:1766.2px;top:1572.0px;font-size:24px;line-height:24px;color:#757575;transform:scaleX(1.1522);">Role</div><div class="t" style="left:2166.6px;top:1572.0px;font-size:24px;line-height:24px;color:#757575;transform:scaleX(1.1932);">Description</div><div class="t" style="left:840.2px;top:1652.0px;font-size:24px;line-height:24px;color:#6f6f6f;transform:scaleX(1.1630);">New</div><div class="t" style="left:2559.7px;top:449.0px;font-size:33px;line-height:33px;color:#0d2c4f;transform:scaleX(1.1075);">Playbook</div><div class="t" style="left:2584.2px;top:553.0px;font-size:31.5px;line-height:31.5px;color:#0d2c4f;transform:scaleX(1.1636);">New Presentation Style</div><div class="t" style="left:2601.4px;top:613.0px;font-size:25.5px;line-height:25.5px;color:#8a4b06;transform:scaleX(1.1898);">Advertising materials</div><div class="t" style="left:2586.5px;top:696.0px;font-size:25px;line-height:25px;color:#4f4f4f;transform:scaleX(1.1907);">A corporate identity is the overall image of a</div><div class="t" style="left:2585.3px;top:736.0px;font-size:25px;line-height:25px;color:#4f4f4f;transform:scaleX(1.2071);">corporation or firm or business in the minds</div><div class="t" style="left:2585.3px;top:776.0px;font-size:25px;line-height:25px;color:#4f4f4f;transform:scaleX(1.1840);">of diverse publics, such as customers and</div><div class="t" style="left:2584.2px;top:816.0px;font-size:25px;line-height:25px;color:#4f4f4f;transform:scaleX(1.1707);">investors and employees. It is a primary tas...</div><div class="t" style="left:2632.4px;top:883.0px;font-size:25px;line-height:25px;color:#0b4fd6;transform:scaleX(1.0955);">John Best</div><div class="t" style="left:2772.3px;top:882.0px;font-size:25px;line-height:25px;color:#777;transform:scaleX(1.1000);">|</div><div class="t" style="left:2793.3px;top:883.0px;font-size:25px;line-height:25px;color:#6a6a6a;transform:scaleX(1.0545);">2/27/2024</div><div class="t" style="left:2584.1px;top:1000.0px;font-size:31.5px;line-height:31.5px;color:#0d2c4f;transform:scaleX(1.1916);">Conducting Online Presentation</div><div class="t" style="left:2600.1px;top:1059.0px;font-size:25.5px;line-height:25.5px;color:#0b5040;transform:scaleX(1.1721);">Rules and regulations</div><div class="t" style="left:2585.3px;top:1141.0px;font-size:25px;line-height:25px;color:#4f4f4f;transform:scaleX(1.1908);">Online presentations are a great way to</div><div class="t" style="left:2585.3px;top:1181.0px;font-size:25px;line-height:25px;color:#4f4f4f;transform:scaleX(1.2298);">connect with potential customers and</div><div class="t" style="left:2584.1px;top:1221.0px;font-size:25px;line-height:25px;color:#4f4f4f;transform:scaleX(1.1985);">partners, especially in today's remote world.</div><div class="t" style="left:2584.1px;top:1261.0px;font-size:25px;line-height:25px;color:#4f4f4f;transform:scaleX(1.2108);">However, it's important to conduct online...</div><div class="t" style="left:2632.4px;top:1329.0px;font-size:25px;line-height:25px;color:#0b4fd6;transform:scaleX(1.0955);">John Best</div><div class="t" style="left:2772.3px;top:1327.0px;font-size:25px;line-height:25px;color:#777;transform:scaleX(1.1000);">|</div><div class="t" style="left:2793.3px;top:1329.0px;font-size:25px;line-height:25px;color:#6a6a6a;transform:scaleX(1.0891);">2/28/2024</div>
</body></html>
